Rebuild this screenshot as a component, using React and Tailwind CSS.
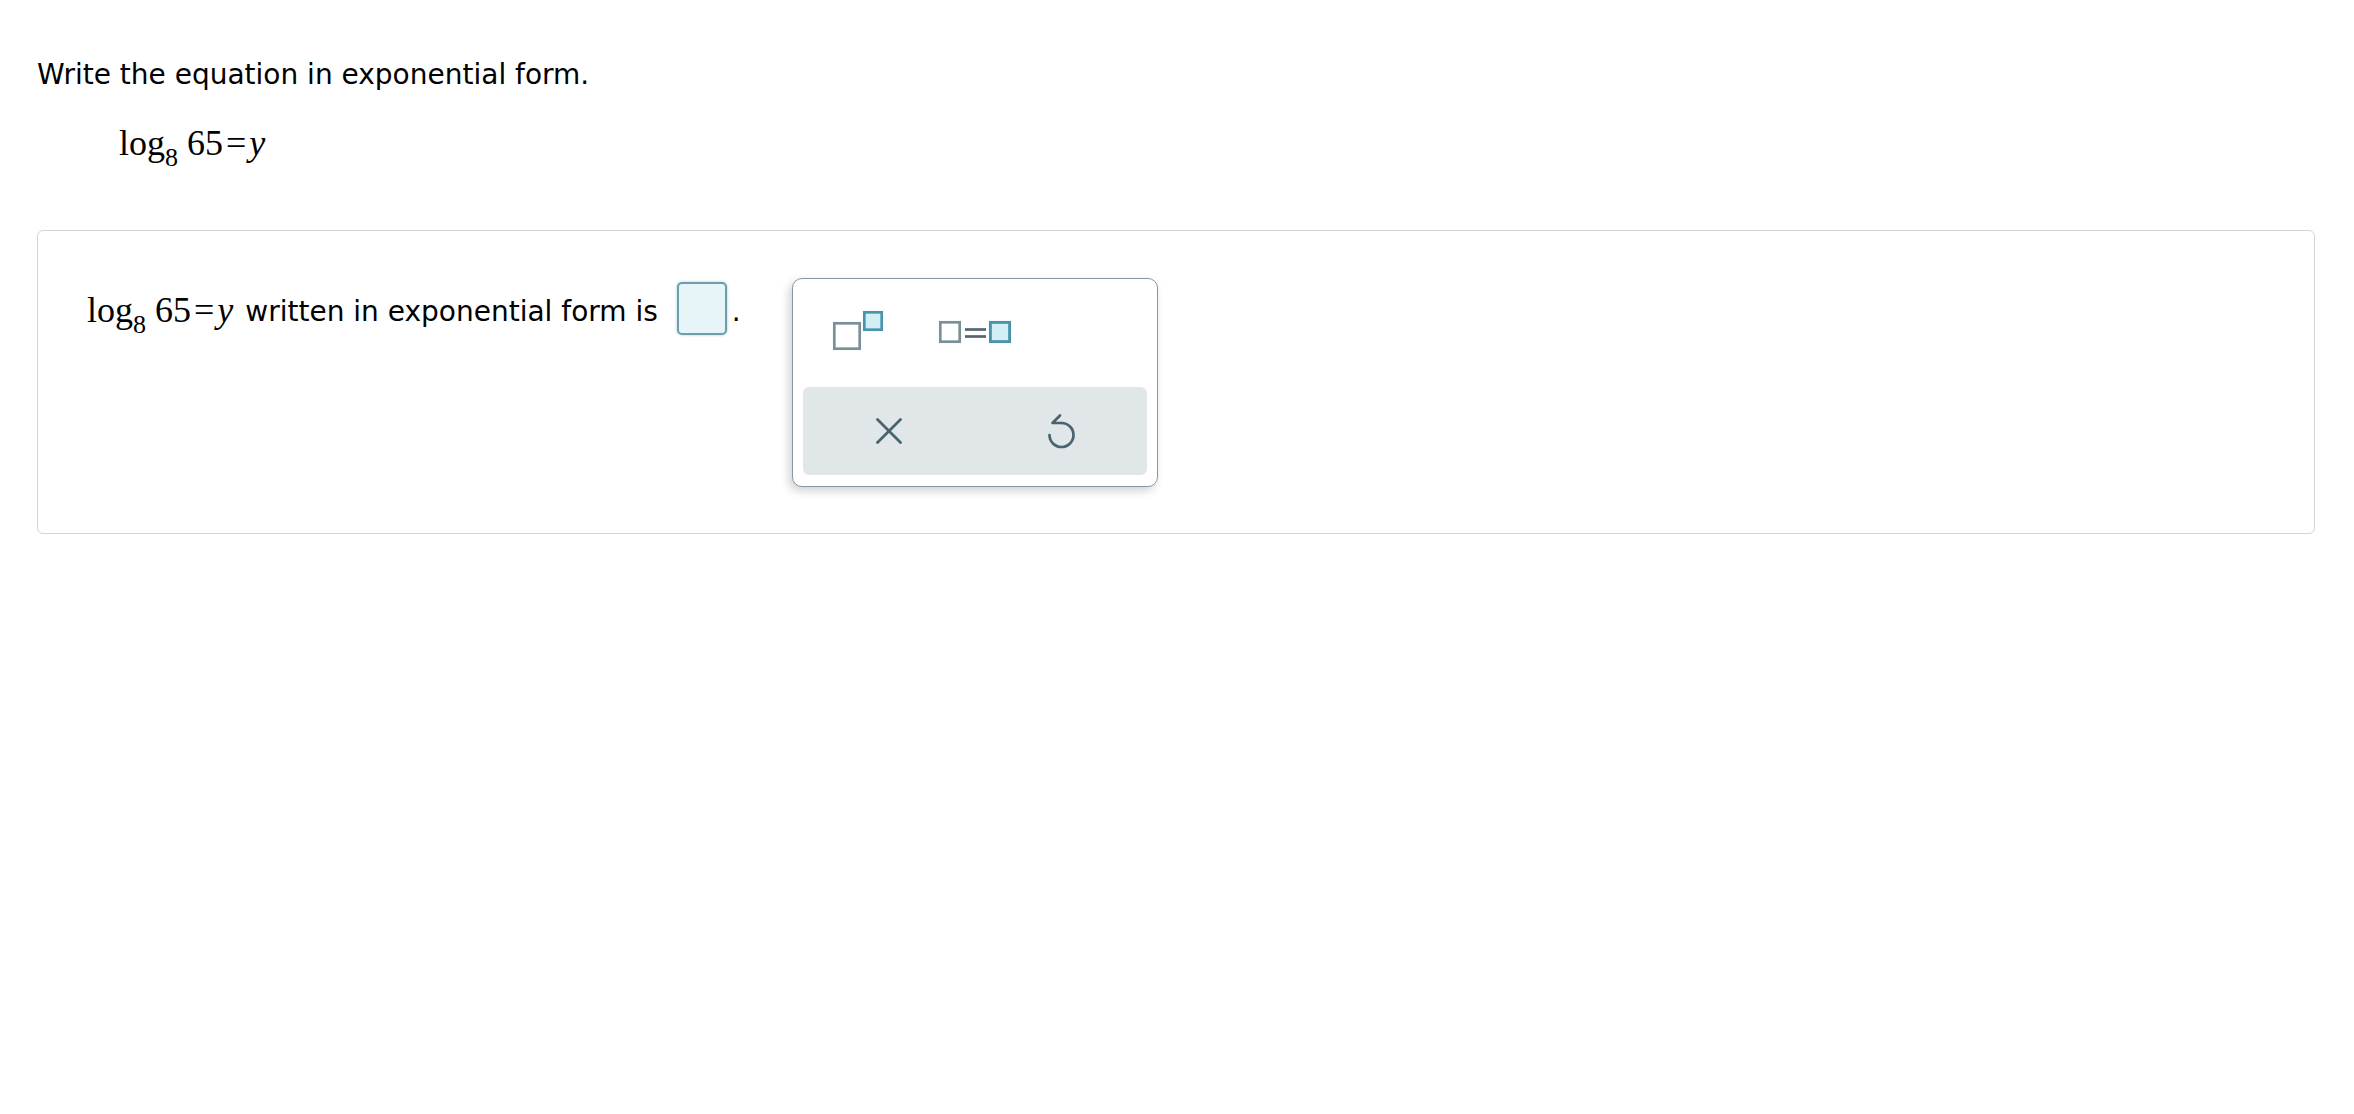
import React from "react";

function MathLog() {
  return (
    <span className="font-['Liberation_Serif',serif] text-[36px] leading-[40px] text-black whitespace-nowrap">
      log
      <span className="text-[26px] leading-none align-[-11px]">8</span>
      <span className="ml-[9px]">65</span>
      <span className="mx-[3px]">=</span>
      <span className="italic">y</span>
    </span>
  );
}

function SuperscriptIcon() {
  return (
    <svg width="52" height="42" viewBox="0 0 52 42">
      <rect x="2.3" y="13.3" width="25.4" height="25.4" fill="white" stroke="#7b8f98" strokeWidth="2.7" />
      <rect x="32.3" y="2.3" width="17.4" height="17.4" fill="#d4eef5" stroke="#4895ab" strokeWidth="2.7" />
    </svg>
  );
}

function EquationIcon() {
  return (
    <svg width="74" height="24" viewBox="0 0 74 24">
      <rect x="2.3" y="2.3" width="19.4" height="19.4" fill="white" stroke="#7b8f98" strokeWidth="2.7" />
      <line x1="27" y1="9.5" x2="48" y2="9.5" stroke="#54656d" strokeWidth="2.7" />
      <line x1="27" y1="16.5" x2="48" y2="16.5" stroke="#54656d" strokeWidth="2.7" />
      <rect x="52.4" y="2.4" width="19.2" height="19.2" fill="#d4eef5" stroke="#4895ab" strokeWidth="2.9" />
    </svg>
  );
}

function CloseIcon() {
  return (
    <svg width="26" height="26" viewBox="0 0 26 26">
      <line x1="1.5" y1="1.5" x2="24.5" y2="24.5" stroke="#48656f" strokeWidth="2.8" strokeLinecap="round" />
      <line x1="24.5" y1="1.5" x2="1.5" y2="24.5" stroke="#48656f" strokeWidth="2.8" strokeLinecap="round" />
    </svg>
  );
}

function UndoIcon() {
  return (
    <svg width="30" height="38" viewBox="0 0 30 38">
      <path
        d="M15.5 11 A12 12 0 1 1 3.5 23"
        fill="none"
        stroke="#48656f"
        strokeWidth="2.7"
        strokeLinecap="round"
      />
      <path
        d="M14 3.5 L6.5 11 L15.5 11"
        fill="none"
        stroke="#48656f"
        strokeWidth="2.7"
        strokeLinecap="round"
        strokeLinejoin="round"
      />
    </svg>
  );
}

export default function App() {
  return (
    <div className="min-h-[1114px] w-full bg-white pl-[37px] pr-[39px] pt-[59px] font-['DejaVu_Sans',sans-serif] text-black">
      <div className="text-[28px] leading-[32px]">Write the equation in exponential form.</div>

      <div className="ml-[82px] mt-[32px] h-[40px]">
        <MathLog />
      </div>

      <div className="mt-[67px] rounded-[6px] border border-[#d1d6d9] pl-[49px] pt-[47px] pb-[46px]">
        <div className="flex items-start">
          <div className="mt-[12px]">
            <MathLog />
          </div>
          <div className="mt-[18px] ml-[12px] text-[28px] leading-[32px] whitespace-nowrap">
            written in exponential form is
          </div>
          <div className="mt-[4px] ml-[19px] h-[53px] w-[50px] rounded-[5px] border-2 border-[#6c9fad] bg-[#e7f4f8] shadow-[0_0_3px_rgba(90,150,170,0.5)]" />
          <div className="mt-[18px] ml-[5px] text-[28px] leading-[32px]">.</div>

          <div className="ml-[51px] h-[209px] w-[366px] rounded-[10px] border border-[#8597a0] bg-white shadow-[-3px_4px_10px_rgba(0,0,0,0.18)]">
            <div className="flex h-[108px] items-start pl-[39px]">
              <div className="mt-[31px]">
                <SuperscriptIcon />
              </div>
              <div className="ml-[54px] mt-[41px]">
                <EquationIcon />
              </div>
            </div>
            <div className="mx-[10px] flex h-[88px] rounded-[6px] bg-[#e1e6e9]">
              <div className="flex flex-1 items-center justify-center">
                <CloseIcon />
              </div>
              <div className="flex flex-1 items-center justify-center">
                <UndoIcon />
              </div>
            </div>
          </div>
        </div>
      </div>
    </div>
  );
}
